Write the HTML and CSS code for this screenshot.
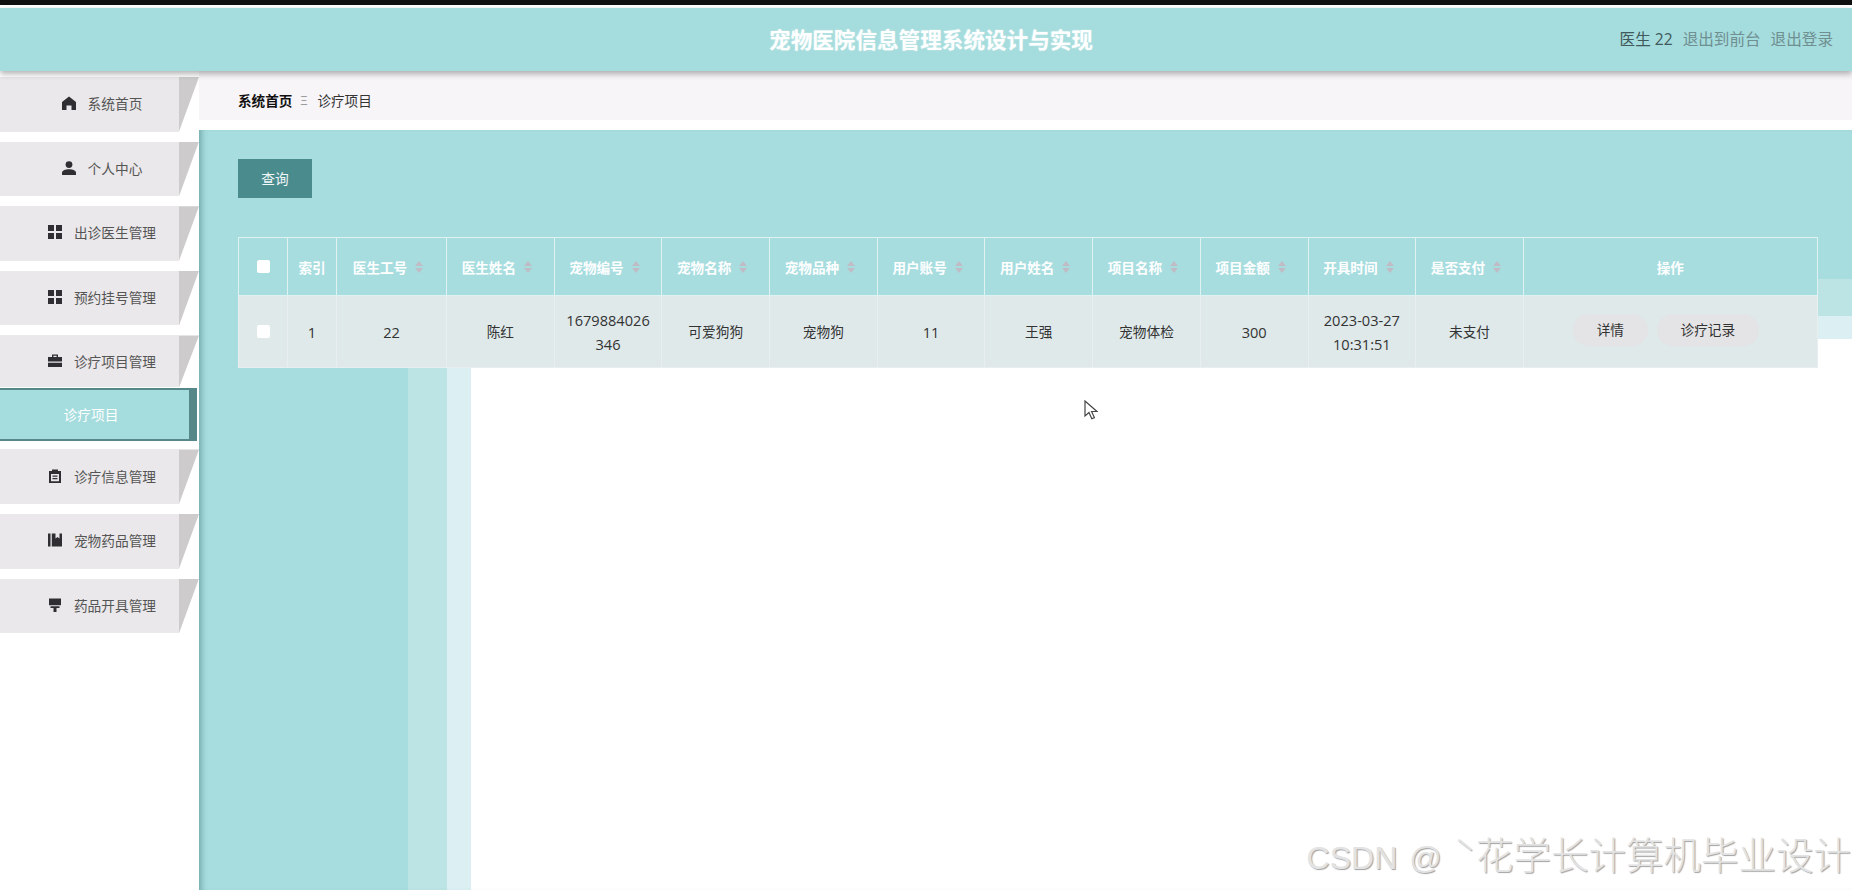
FILE: index.html
```html
<!DOCTYPE html>
<html lang="zh-CN">
<head>
    <meta charset="UTF-8">
    <title>宠物医院信息管理系统设计与实现</title>
    <link rel="stylesheet" href="styles.css">
</head>
<body>
    <div class="topstrip"></div>
    <header class="header">
        <div></div>
        <div class="header-title">宠物医院信息管理系统设计与实现</div>
        <div class="header-user">
            <span class="user-name">医生 22</span>
            <a class="user-link">退出到前台</a>
            <a class="user-link">退出登录</a>
        </div>
    </header>
    <div class="layout">
        <nav class="sidebar">
            <a class="menu-item">
                <svg class="menu-icon" viewBox="0 0 14 14"><path d="M7 .5 14 6v8H9.500V9.500h-5V14H0V6z"/></svg>
                <span>系统首页</span>
            </a>
            <a class="menu-item">
                <svg class="menu-icon" viewBox="0 0 14 14"><circle cx="7" cy="3.600" r="3.400"/><path d="M0 14v-2.200C0 9.600 3 8.200 7 8.200s7 1.400 7 3.600V14z"/></svg>
                <span>个人中心</span>
            </a>
            <a class="menu-item">
                <svg class="menu-icon" viewBox="0 0 14 14"><path d="M0 0h6v6H0zM8 0h6v6H8zM0 8h6v6H0zM8 8h6v6H8z"/></svg>
                <span>出诊医生管理</span>
            </a>
            <a class="menu-item">
                <svg class="menu-icon" viewBox="0 0 14 14"><path d="M0 0h6v6H0zM8 0h6v6H8zM0 8h6v6H0zM8 8h6v6H8z"/></svg>
                <span>预约挂号管理</span>
            </a>
            <a class="menu-item menu-item-open">
                <svg class="menu-icon" viewBox="0 0 14 14"><path d="M4 3V.5h6V3h4v4.500H0V3zm1.400 0h3.200V1.800H5.400zM0 8.700h14V13H0z"/></svg>
                <span>诊疗项目管理</span>
            </a>
            <a class="submenu-item">诊疗项目</a>
            <a class="menu-item">
                <svg class="menu-icon" viewBox="0 0 14 14"><path d="M1 2h3V.5h6V2h3v12H1zm2 3v7.200h8V5zm1.500 1.500h5v1.300h-5zm0 2.500h5v1.300h-5z"/></svg>
                <span>诊疗信息管理</span>
            </a>
            <a class="menu-item">
                <svg class="menu-icon" viewBox="0 0 14 14"><path d="M0 .5h2.500v13H0zM3.800.5h3.700v5l2-1.600 2 1.600v-5H14v13H3.800z"/></svg>
                <span>宠物药品管理</span>
            </a>
            <a class="menu-item">
                <svg class="menu-icon" viewBox="0 0 14 14"><path d="M1 .5h12v6.800H1zM2.500 8.300h9v1.700H8.500v4h-3v-4h-3z"/></svg>
                <span>药品开具管理</span>
            </a>
        </nav>
        <main class="main">
            <div class="breadcrumb">
                <span class="crumb-home">系统首页</span>
                <span class="crumb-sep">Ξ</span>
                <span class="crumb-current">诊疗项目</span>
            </div>
            <section class="content">
                <button class="search-btn">查询</button>
                <table class="data-table">
                    <colgroup>
                        <col class="col-narrow"><col class="col-narrow"><col class="col-first">
                        <col class="col-std"><col class="col-std"><col class="col-std"><col class="col-std"><col class="col-std">
                        <col class="col-std"><col class="col-std"><col class="col-std"><col class="col-std"><col class="col-std">
                        <col class="col-action">
                    </colgroup>
                    <thead>
                        <tr>
                            <th><span class="checkbox"></span></th>
                            <th>索引</th>
                            <th><span class="th-sort">医生工号<i class="caret"></i></span></th>
                            <th><span class="th-sort">医生姓名<i class="caret"></i></span></th>
                            <th><span class="th-sort">宠物编号<i class="caret"></i></span></th>
                            <th><span class="th-sort">宠物名称<i class="caret"></i></span></th>
                            <th><span class="th-sort">宠物品种<i class="caret"></i></span></th>
                            <th><span class="th-sort">用户账号<i class="caret"></i></span></th>
                            <th><span class="th-sort">用户姓名<i class="caret"></i></span></th>
                            <th><span class="th-sort">项目名称<i class="caret"></i></span></th>
                            <th><span class="th-sort">项目金额<i class="caret"></i></span></th>
                            <th><span class="th-sort">开具时间<i class="caret"></i></span></th>
                            <th><span class="th-sort">是否支付<i class="caret"></i></span></th>
                            <th>操作</th>
                        </tr>
                    </thead>
                    <tbody>
                        <tr>
                            <td><span class="checkbox"></span></td>
                            <td class="cell-num">1</td>
                            <td class="cell-num">22</td>
                            <td>陈红</td>
                            <td class="cell-num cell-break">1679884026346</td>
                            <td>可爱狗狗</td>
                            <td>宠物狗</td>
                            <td class="cell-num">11</td>
                            <td>王强</td>
                            <td>宠物体检</td>
                            <td class="cell-num">300</td>
                            <td class="cell-num">2023-03-27 10:31:51</td>
                            <td>未支付</td>
                            <td>
                                <div class="row-actions">
                                    <a class="pill-btn pill-short">详情</a>
                                    <a class="pill-btn pill-long">诊疗记录</a>
                                </div>
                            </td>
                        </tr>
                    </tbody>
                </table>
            </section>
        </main>
    </div>
    <svg class="cursor" viewBox="0 0 14 20"><path d="M1 1v15l4-3.500 2.800 6.300 2.600-1.200L7.600 11.500H13z" fill="#fff" stroke="#444" stroke-width="1.200"/></svg>
    <div class="watermark">CSDN @ <span class="watermark-cjk">ˋ花学长计算机毕业设计</span></div>
</body>
</html>
```

FILE: styles.css
```css
* {
    margin: 0;
    padding: 0;
    box-sizing: border-box;
}
html, body {
    height: 100%;
}
body {
    position: relative;
    overflow: hidden;
    display: flex;
    flex-direction: column;
    background: #fff;
    color: #333;
    font-size: 14px;
    font-family: "Open Sans", "Noto Sans CJK SC", sans-serif;
}

/* top of the captured window */
.topstrip {
    flex: none;
    height: 8px;
    background: #fff;
    border-top: 5px solid #0f0f0f;
}

.header {
    position: relative;
    z-index: 5;
    flex: none;
    display: grid;
    grid-template-columns: 1fr auto 1fr;
    align-items: center;
    height: 63px;
    padding: 0 19px 0 0;
    background: #a5dcdd;
    box-shadow: 0 3px 6px rgba(0, 0, 0, .3);
}
.header-title {
    padding: 0 0 2px 29px;
    color: #fff;
    font-size: 21.6px;
    font-weight: 700;
    text-shadow: 0 0 2px rgba(255, 255, 255, .5);
}
.header-user {
    display: flex;
    justify-content: flex-end;
    gap: 10px;
    padding-bottom: 3px;
    font-size: 15.6px;
}
.user-name {
    color: #40595b;
}
.user-link {
    color: #6f8f91;
}

.layout {
    flex: 1;
    display: flex;
    min-height: 0;
}

/* sidebar */
.sidebar {
    flex: none;
    width: 199px;
    padding-top: 6px;
    background: #fff;
}
.menu-item {
    position: relative;
    display: flex;
    align-items: center;
    justify-content: center;
    gap: 12px;
    width: 199px;
    height: 54.6px;
    margin-bottom: 10px;
    padding: 0 0 2px 5px;
    background: linear-gradient(#eae8ea, #eae8ea) 0 0 / 179px 100% no-repeat;
    color: #555;
    font-size: 13.7px;
}
.menu-item::after {
    content: "";
    position: absolute;
    top: 0;
    right: 0;
    width: 20px;
    height: 100%;
    background: #cdcbcc;
    clip-path: polygon(0 0, 100% 0, 0 100%);
}
.menu-item-open {
    height: 52px;
    margin-bottom: 1px;
    padding-bottom: 0;
}
.menu-icon {
    flex: none;
    width: 14px;
    height: 14px;
    fill: #2f2f33;
}
.submenu-item {
    display: flex;
    align-items: center;
    justify-content: center;
    width: 197px;
    height: 53px;
    margin-bottom: 8px;
    padding: 0 7px 2px 0;
    background: #a5dcdd;
    border-top: 2px solid #56888a;
    border-bottom: 2px solid #56888a;
    border-right: 8px solid #56888a;
    color: #fff;
    font-size: 13.7px;
}

/* main */
.main {
    flex: 1;
    display: flex;
    flex-direction: column;
    min-width: 0;
}
.breadcrumb {
    flex: none;
    display: flex;
    align-items: center;
    height: 49px;
    margin-bottom: 10px;
    padding: 9px 0 0 39px;
    background: #f8f5f8;
    font-size: 13.6px;
}
.crumb-home {
    color: #111;
    font-weight: 700;
}
.crumb-sep {
    width: 16px;
    margin: 0 1px 0 8px;
    color: #555;
    font-size: 13px;
    font-weight: 300;
}
.crumb-current {
    color: #333;
}

.content {
    flex: 1;
    padding: 29px 0 0 39px;
    background:
        linear-gradient(#a7dddf, #a7dddf) 0 0 / 100% 149px no-repeat,
        linear-gradient(#a7dddf, #a7dddf) 0 0 / 209px 100% no-repeat,
        linear-gradient(#bde4e4, #bde4e4) 0 0 / 100% 186px no-repeat,
        linear-gradient(#bde4e4, #bde4e4) 0 0 / 248px 100% no-repeat,
        linear-gradient(#dcf0f3, #dcf0f3) 0 0 / 100% 209px no-repeat,
        linear-gradient(#dcf0f3, #dcf0f3) 0 0 / 272px 100% no-repeat,
        #fff;
    box-shadow: inset 7px 0 6px -5px rgba(40, 90, 95, .45);
}
.search-btn {
    display: block;
    width: 74px;
    height: 39px;
    margin-bottom: 39px;
    padding-bottom: 2px;
    border: 0;
    background: #4a8b8e;
    color: #f2f8f8;
    font-size: 13.7px;
    font-family: inherit;
}

/* table */
.data-table {
    width: 1579px;
    table-layout: fixed;
    border-collapse: collapse;
    text-align: center;
}
.col-narrow {
    width: 49px;
}
.col-first {
    width: 110px;
}
.col-std {
    width: 107.7px;
}
.col-action {
    width: 294px;
}
.data-table th {
    height: 58px;
    border: 1px solid #dff2f2;
    background: #a7dddf;
    color: #fff;
    font-size: 13.6px;
    font-weight: 700;
}
.data-table td {
    height: 72px;
    padding: 0 10px;
    border: 1px solid #e9eeef;
    background: #dfe9ea;
    color: #333;
    font-size: 13.7px;
    line-height: 24px;
}
.data-table .cell-num {
    font-size: 14.6px;
}
.cell-break {
    word-break: break-all;
}
.th-sort {
    display: inline-flex;
    align-items: center;
    gap: 8px;
    margin-right: 7px;
}
.caret {
    display: inline-block;
    position: relative;
    width: 8px;
    height: 12px;
}
.caret::before,
.caret::after {
    content: "";
    position: absolute;
    left: 0;
    border-left: 4px solid transparent;
    border-right: 4px solid transparent;
}
.caret::before {
    top: 0;
    border-bottom: 5px solid #bfbcc6;
}
.caret::after {
    bottom: 0;
    border-top: 5px solid #bfbcc6;
}
.checkbox {
    display: block;
    width: 13px;
    height: 13px;
    margin: 0 auto;
    border-radius: 2px;
    background: #fff;
}
.row-actions {
    display: flex;
    justify-content: center;
    gap: 9px;
    margin: 0 0 4px -9px;
}
.pill-btn {
    height: 32px;
    border-radius: 16px;
    background: #e4e3e5;
    color: #333;
    line-height: 31px;
}
.pill-short {
    width: 75px;
}
.pill-long {
    width: 102px;
}

/* things lying over the page */
.cursor {
    position: absolute;
    top: 400px;
    left: 1084px;
    width: 14px;
    height: 20px;
}
.watermark {
    position: absolute;
    right: 1px;
    bottom: 10px;
    color: #e3e3e3;
    font-size: 32px;
    font-family: "Liberation Sans", sans-serif;
    line-height: 44px;
    white-space: nowrap;
    word-spacing: 3px;
    text-shadow: 1px 1px 1px #a0a0a0;
}
.watermark-cjk {
    font-size: 37.5px;
    font-family: "Noto Sans CJK SC", sans-serif;
    font-weight: 300;
}
```
